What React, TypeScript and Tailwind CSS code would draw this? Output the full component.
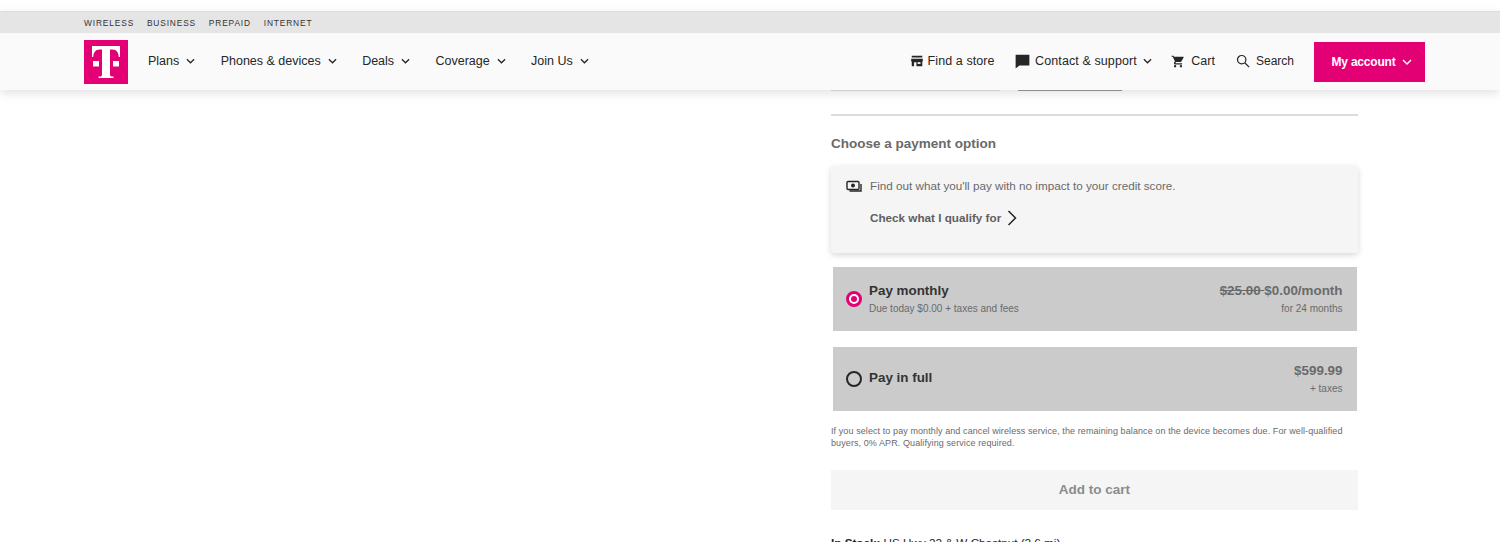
import React from "react";

const Chevron = ({ className = "" }: { className?: string }) => (
  <svg viewBox="0 0 10 6" className={`w-[9px] h-[6px] ${className}`} fill="none" stroke="currentColor" strokeWidth="1.4">
    <path d="M1 1l4 4 4-4" />
  </svg>
);

const NavItem = ({ label }: { label: string }) => (
  <a className="flex items-center gap-[7px] text-[12.5px] text-[#262626]">
    {label}
    <Chevron />
  </a>
);

const Logo = () => (
  <div className="w-[44px] h-[44px] bg-[#e20074] shrink-0">
    <svg viewBox="0 0 44 44" className="w-[44px] h-[44px]" fill="#fff">
      <path d="M8 6h28v11h-1.200c-.2-4.500-2.200-7.500-6.300-7.600H26v25c0 1.500.7 2 2.400 2.100h1.100V38h-15v-1.500h1.100c1.700-.1 2.400-.6 2.400-2.100V9.400h-2.500C11.400 9.500 9.400 12.500 9.200 17H8z" />
      <rect x="9" y="21" width="6" height="5.500" />
      <rect x="29" y="21" width="6" height="5.500" />
    </svg>
  </div>
);

const Store = () => (
  <svg viewBox="0 0 24 24" className="w-[14px] h-[14px]" fill="#262626">
    <path d="M3 3h18v3H3zM2 8h20v5h-1v8H11v-7H7v7H3v-8H2z" />
    <path d="M13 14h5v3h-5z" fill="#fafafa" />
  </svg>
);

const Chat = () => (
  <svg viewBox="0 0 24 24" className="w-[15px] h-[16px]" fill="#262626">
    <path d="M1 2h22v17H7l-6 5z" />
  </svg>
);

const Cart = () => (
  <svg viewBox="0 0 24 24" className="w-[14px] h-[15px]" fill="#262626">
    <path d="M7 18a2 2 0 100 4 2 2 0 000-4zm10 0a2 2 0 100 4 2 2 0 000-4zM1 2v2h2l3.600 7.600-1.400 2.400c-.7 1.300.3 3 1.800 3h12v-2H7.400l1.100-2h7.500c.7 0 1.400-.4 1.700-1L21.600 5c.4-.7-.1-1-.9-1H5.200l-.9-2z" />
  </svg>
);

const Search = () => (
  <svg viewBox="0 0 16 16" className="w-[14px] h-[14px]" fill="none" stroke="#262626" strokeWidth="1.4">
    <circle cx="6.500" cy="6.500" r="4.800" />
    <path d="M10 10l5 5" />
  </svg>
);

const Money = () => (
  <svg viewBox="0 0 16 13" className="w-[16px] h-[13px]" fill="none" stroke="#262626">
    <rect x="1" y="1.500" width="12" height="8" rx="1" strokeWidth="1.400" />
    <circle cx="7" cy="5.500" r="2" fill="#262626" stroke="none" />
    <path d="M15 4v7H3.500" strokeWidth="1.400" />
  </svg>
);

const RadioOn = () => (
  <span className="w-[16px] h-[16px] rounded-full border-[3px] border-[#e20074] bg-white flex items-center justify-center shrink-0">
    <span className="w-[6px] h-[6px] rounded-full bg-[#e20074]" />
  </span>
);

const RadioOff = () => (
  <span className="w-[16px] h-[16px] -mt-px rounded-full border-2 border-[#262626] shrink-0" />
);

export default function App() {
  return (
    <div className="h-[542px] overflow-hidden bg-white font-['Liberation_Sans',Arial,sans-serif]">
      <div className="h-[11px] bg-white" />
      <header className="relative z-10 shadow-[0_3px_10px_rgba(0,0,0,0.12)]">
        <div className="h-[22px] bg-[#e5e5e5] border-t border-[#dcdcdc] pl-[84px] pt-[2px] flex items-center gap-[12.800px] text-[8.400px] tracking-[0.85px] text-[#333]">
          <span>WIRELESS</span>
          <span>BUSINESS</span>
          <span>PREPAID</span>
          <span>INTERNET</span>
        </div>
        <div className="h-[57px] bg-[#fafafa] pl-[84px] pr-[75px] flex items-start">
          <div className="pt-[6.500px]">
            <Logo />
          </div>
          <nav className="h-[56px] ml-[20px] flex items-center gap-[25.400px]">
            <NavItem label="Plans" />
            <NavItem label="Phones & devices" />
            <NavItem label="Deals" />
            <NavItem label="Coverage" />
            <NavItem label="Join Us" />
          </nav>
          <div className="ml-auto h-[56px] flex items-center text-[12.500px] text-[#262626]">
            <a className="flex items-center gap-[4px]">
              <Store />
              <span className="tracking-[0.08px]">Find a store</span>
            </a>
            <a className="flex items-center gap-[5px] ml-[20.500px]">
              <Chat />
              <span className="tracking-[0.1px]">Contact &amp; support</span>
              <Chevron className="ml-px" />
            </a>
            <a className="flex items-center gap-[6px] ml-[19.500px]">
              <Cart />
              Cart
            </a>
            <a className="flex items-center gap-[6px] ml-[21px]">
              <Search />
              <span className="text-[12px]">Search</span>
            </a>
            <a className="ml-[20px] mt-[2px] pl-[4px] w-[111px] h-[40px] bg-[#e20074] text-white font-bold text-[12px] tracking-[-0.2px] flex items-center justify-center gap-[6px]">
              My account
              <Chevron className="w-[10px]" />
            </a>
          </div>
        </div>
      </header>

      <main className="flex justify-end pr-[142px]">
        <section className="w-[527px]">
          <div className="flex h-[24px]">
            <div className="h-px w-[169px] bg-[#e2e2e2]" />
            <div className="h-px w-[104px] bg-[#9b9b9b] ml-[18px]" />
          </div>
          <div className="h-[2px] bg-[#dcdcdc]" />
          <h2 className="mt-[20px] text-[13.500px] leading-[16px] font-bold text-[#6a6a6a]">Choose a payment option</h2>

          <div className="mt-[14px] h-[87px] bg-[#f5f5f5] rounded-[3px] shadow-[0_2px_6px_rgba(0,0,0,0.16)] pl-[15px] pt-[14px]">
            <div className="flex items-center gap-[8px] -mt-px text-[11.700px] leading-[14px] text-[#6a6a6a]">
              <Money />
              <span>Find out what you'll pay with no impact to your credit score.</span>
            </div>
            <div className="mt-[16px] ml-[24px] flex items-center gap-[6px] text-[11.700px] font-bold text-[#5f5f5f]">
              Check what I qualify for
              <svg viewBox="0 0 10 16" className="w-[10px] h-[16px]" fill="none" stroke="#262626" strokeWidth="1.500">
                <path d="M1.500 1l7 7-7 7" />
              </svg>
            </div>
          </div>

          <div className="mt-[14px] mx-[1.500px] h-[64px] bg-[#cbcbcb] pl-[13.500px] pr-[14px] flex items-center justify-between">
            <div className="flex items-center gap-[7px]">
              <RadioOn />
              <div className="-mt-px">
                <div className="text-[13.400px] leading-[16px] font-bold text-[#333]">Pay monthly</div>
                <div className="mt-[4px] text-[10px] leading-[12px] text-[#6a6a6a]">Due today $0.00 + taxes and fees</div>
              </div>
            </div>
            <div className="text-right -mt-px">
              <div className="text-[13.400px] leading-[16px] font-bold text-[#6a6a6a]">
                <s>$25.00 </s>$0.00/month
              </div>
              <div className="mt-[4px] text-[10px] leading-[12px] text-[#6a6a6a]">for 24 months</div>
            </div>
          </div>

          <div className="mt-[16px] mx-[1.500px] h-[64px] bg-[#cbcbcb] pl-[13.500px] pr-[14px] flex items-center justify-between">
            <div className="flex items-center gap-[7px]">
              <RadioOff />
              <div className="text-[13.400px] leading-[16px] font-bold text-[#333] -mt-[3px]">Pay in full</div>
            </div>
            <div className="text-right">
              <div className="text-[13.400px] leading-[16px] font-bold text-[#6a6a6a]">$599.99</div>
              <div className="mt-[4px] text-[10px] leading-[12px] text-[#6a6a6a]">+ taxes</div>
            </div>
          </div>

          <p className="mt-[14px] text-[9px] leading-[12px] text-[#6a6a6a] tracking-[0.09px]">
            If you select to pay monthly and cancel wireless service, the remaining balance on the device becomes due. For well-qualified buyers, 0% APR. Qualifying service required.
          </p>

          <button className="mt-[22px] w-full h-[40px] bg-[#f5f5f5] text-[13.500px] font-bold text-[#8c8c8c] -translate-y-px">Add to cart</button>

          <p className="mt-[25px] text-[11.700px] leading-[14px] text-[#262626]">
            <b>In Stock:</b> <span>US Hwy 22 &amp; W Chestnut (2.6 mi)</span>
          </p>
        </section>
      </main>
    </div>
  );
}
